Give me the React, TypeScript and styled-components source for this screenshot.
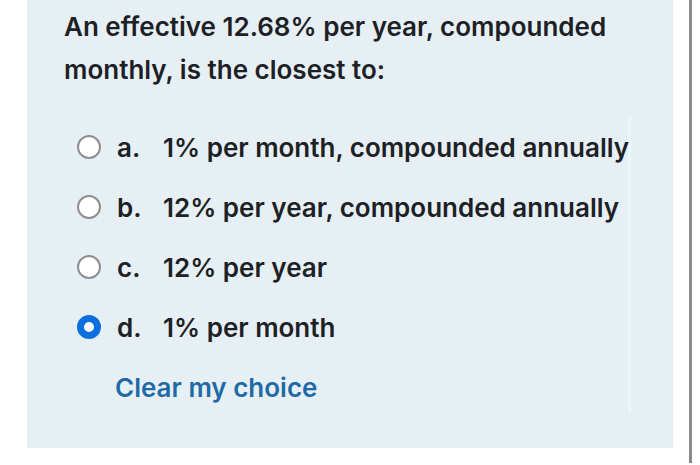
import React from "react";
import styled, { createGlobalStyle } from "styled-components";

const Global = createGlobalStyle`
  html, body { margin: 0; padding: 0; background: #ffffff; }
  body { font-family: Inter, "Liberation Sans", Arial, sans-serif; }
`;

const Page = styled.div`
  position: relative;
  width: 700px;
  height: 465px;
  display: flex;
  background: #ffffff;
  overflow: hidden;
`;

const Panel = styled.div`
  margin-left: 27px;
  width: 646px;
  height: 448px;
  background: #e6f0f4;
  box-sizing: border-box;
  padding: 5px 0 0 37px;
  display: flex;
  flex-direction: column;
`;

const Question = styled.div`
  font-size: 26px;
  font-weight: 600;
  line-height: 43px;
  color: #1d2125;
`;

const Body = styled.div`
  margin-top: 26px;
  width: 564px;
  height: 295px;
  display: flex;
  flex-direction: column;
  border-right: 3px solid #ecf6f9;
`;

const Answers = styled.div`
  display: flex;
  flex-direction: column;
`;

const Option = styled.label`
  display: flex;
  align-items: center;
  height: 60px;
  margin-left: 13px;
  font-size: 26px;
  font-weight: 600;
  color: #1d2125;
`;

const Radio = styled.span<{ $checked?: boolean }>`
  box-sizing: border-box;
  width: 24px;
  height: 24px;
  border-radius: 50%;
  flex: none;
  background: #ffffff;
  border: ${(p) => (p.$checked ? "7px solid #0c6fdf" : "2px solid #8d8f91")};
`;

const Letter = styled.span`
  margin-left: 16px;
  width: 46px;
  flex: none;
`;

const Text = styled.span`
  white-space: nowrap;
`;

const Clear = styled.a`
  margin-top: 15px;
  margin-left: 51px;
  font-size: 26px;
  font-weight: 600;
  color: #1f6aa5;
  text-decoration: none;
`;

const Divider = styled.div`
  position: absolute;
  left: 689px;
  top: 0;
  width: 3px;
  height: 463px;
  background: #8a8a8a;
`;

const options = [
  { letter: "a.", text: "1% per month, compounded annually", checked: false },
  { letter: "b.", text: "12% per year, compounded annually", checked: false },
  { letter: "c.", text: "12% per year", checked: false },
  { letter: "d.", text: "1% per month", checked: true },
];

export default function App() {
  return (
    <Page>
      <Global />
      <Panel>
        <Question>
          An effective 12.68% per year, compounded
          <br />
          monthly, is the closest to:
        </Question>
        <Body>
          <Answers>
            {options.map((o) => (
              <Option key={o.letter}>
                <Radio $checked={o.checked} />
                <Letter>{o.letter}</Letter>
                <Text>{o.text}</Text>
              </Option>
            ))}
          </Answers>
          <Clear href="#">Clear my choice</Clear>
        </Body>
      </Panel>
      <Divider />
    </Page>
  );
}
